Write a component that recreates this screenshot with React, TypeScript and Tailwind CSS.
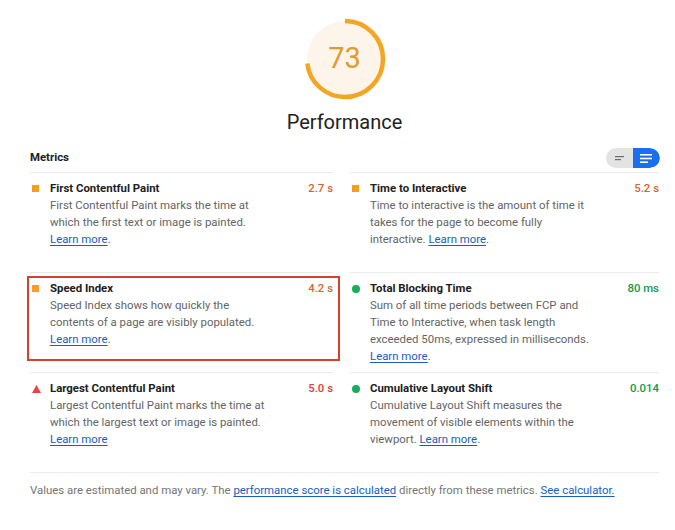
import React from "react";

type Metric = {
  title: string;
  desc: React.ReactNode;
  value: string;
  kind: "avg" | "pass" | "fail";
  highlight?: boolean;
};

const Link = ({ children }: { children: React.ReactNode }) => (
  <a className="text-[#1a5cc4] underline decoration-[#1a5cc4] underline-offset-2">{children}</a>
);

const Icon = ({ kind }: { kind: Metric["kind"] }) => {
  if (kind === "avg")
    return <span className="block w-[7px] h-[7px] bg-[#f5a01a]" />;
  if (kind === "pass")
    return <span className="block w-[8px] h-[8px] rounded-full bg-[#12b05a]" />;
  return (
    <svg width="9" height="8" viewBox="0 0 9 8" className="block">
      <polygon points="4.5,0 9,8 0,8" fill="#e8453c" />
    </svg>
  );
};

const valueColor = {
  avg: "text-[#d9652b]",
  pass: "text-[#0f9a4a]",
  fail: "text-[#e53935]",
};

const MetricCell = ({ m }: { m: Metric }) => (
  <div className="relative h-[100px] border-t border-[#ebebeb] pt-[7px]">
    {m.highlight && (
      <div className="absolute left-[-3px] right-[-7px] top-[3px] h-[85px] border-2 border-[#d9402b] pointer-events-none" />
    )}
    <div className="flex items-start">
      <div className="w-[20px] pl-[2px] h-[17px] flex items-center">
        <Icon kind={m.kind} />
      </div>
      <div className="flex-1 min-w-0">
        <div className="flex justify-between text-[11.4px] leading-[17px]">
          <span className="font-bold text-[#212121]">{m.title}</span>
          <span className={`${valueColor[m.kind]} font-medium`}>{m.value}</span>
        </div>
        <div className="text-[11.4px] leading-[17px] text-[#646464] pr-[30px]">{m.desc}</div>
      </div>
    </div>
  </div>
);

const left: Metric[] = [
  {
    title: "First Contentful Paint",
    value: "2.7 s",
    kind: "avg",
    desc: (
      <>
        First Contentful Paint marks the time at
        <br />
        which the first text or image is painted.
        <br />
        <Link>Learn more</Link>.
      </>
    ),
  },
  {
    title: "Speed Index",
    value: "4.2 s",
    kind: "avg",
    highlight: true,
    desc: (
      <>
        Speed Index shows how quickly the
        <br />
        contents of a page are visibly populated.
        <br />
        <Link>Learn more</Link>.
      </>
    ),
  },
  {
    title: "Largest Contentful Paint",
    value: "5.0 s",
    kind: "fail",
    desc: (
      <>
        Largest Contentful Paint marks the time at
        <br />
        which the largest text or image is painted.
        <br />
        <Link>Learn more</Link>
      </>
    ),
  },
];

const right: Metric[] = [
  {
    title: "Time to Interactive",
    value: "5.2 s",
    kind: "avg",
    desc: (
      <>
        Time to interactive is the amount of time it
        <br />
        takes for the page to become fully
        <br />
        interactive. <Link>Learn more</Link>.
      </>
    ),
  },
  {
    title: "Total Blocking Time",
    value: "80 ms",
    kind: "pass",
    desc: (
      <>
        Sum of all time periods between FCP and
        <br />
        Time to Interactive, when task length
        <br />
        exceeded 50ms, expressed in milliseconds.
        <br />
        <Link>Learn more</Link>.
      </>
    ),
  },
  {
    title: "Cumulative Layout Shift",
    value: "0.014",
    kind: "pass",
    desc: (
      <>
        Cumulative Layout Shift measures the
        <br />
        movement of visible elements within the
        <br />
        viewport. <Link>Learn more</Link>.
      </>
    ),
  },
];

const Gauge = () => {
  const r = 38;
  const c = 2 * Math.PI * r;
  const len = c * 0.73;
  return (
    <div className="relative w-[84px] h-[84px]">
      <svg width="84" height="84" viewBox="0 0 84 84" className="block">
        <circle cx="42" cy="42" r={r} fill="#fdf5e9" stroke="none" />
        <circle
          cx="42"
          cy="42"
          r={r}
          fill="none"
          stroke="#f5a524"
          strokeWidth="4.5"
          strokeDasharray={`${len} ${c}`}
          transform="rotate(-90 42 42)"
        />
      </svg>
      <div className="absolute inset-0 flex items-center justify-center text-[29px] text-[#e39a2e] pb-[1px]">
        73
      </div>
    </div>
  );
};

export default function App() {
  return (
    <div
      className="w-[675px] h-[530px] bg-white overflow-hidden pl-[30px] pr-[16px]"
      style={{ fontFamily: "Roboto, 'Liberation Sans', Arial, sans-serif" }}
    >
      <div className="flex flex-col items-center pt-[17px]">
        <Gauge />
        <div className="mt-[7px] text-[20px] leading-[28px] text-[#212121]">Performance</div>
      </div>

      <div className="flex items-center justify-between mt-[9px] h-[26px]">
        <span className="text-[11.4px] font-bold text-[#212121]">Metrics</span>
        <div className="flex h-[20px] mr-[-1px] rounded-full overflow-hidden">
          <div className="w-[27px] bg-[#e3e3e3] flex items-center justify-center">
            <svg width="12" height="8" viewBox="0 0 12 8">
              <rect x="1" y="2" width="9" height="1.2" fill="#6b6b6b" />
              <rect x="1" y="5" width="6" height="1.2" fill="#6b6b6b" />
            </svg>
          </div>
          <div className="w-[27px] bg-[#1a6ef0] rounded-r-full flex items-center justify-center pr-[2px]">
            <svg width="14" height="11" viewBox="0 0 14 11">
              <rect x="1" y="1" width="12" height="1.6" fill="#fff" />
              <rect x="1" y="4.7" width="12" height="1.6" fill="#fff" />
              <rect x="1" y="8.4" width="8" height="1.6" fill="#fff" />
            </svg>
          </div>
        </div>
      </div>

      <div className="grid grid-cols-[303px_1fr] gap-x-[17px] mt-[1px]">
        {[0, 1, 2].map((i) => (
          <React.Fragment key={i}>
            <MetricCell m={left[i]} />
            <MetricCell m={right[i]} />
          </React.Fragment>
        ))}
      </div>

      <div className="border-t border-[#ebebeb] pt-[9px] text-[11.4px] leading-[17px] text-[#757575]">
        Values are estimated and may vary. The <Link>performance score is calculated</Link> directly from
        these metrics. <Link>See calculator.</Link>
      </div>
    </div>
  );
}
